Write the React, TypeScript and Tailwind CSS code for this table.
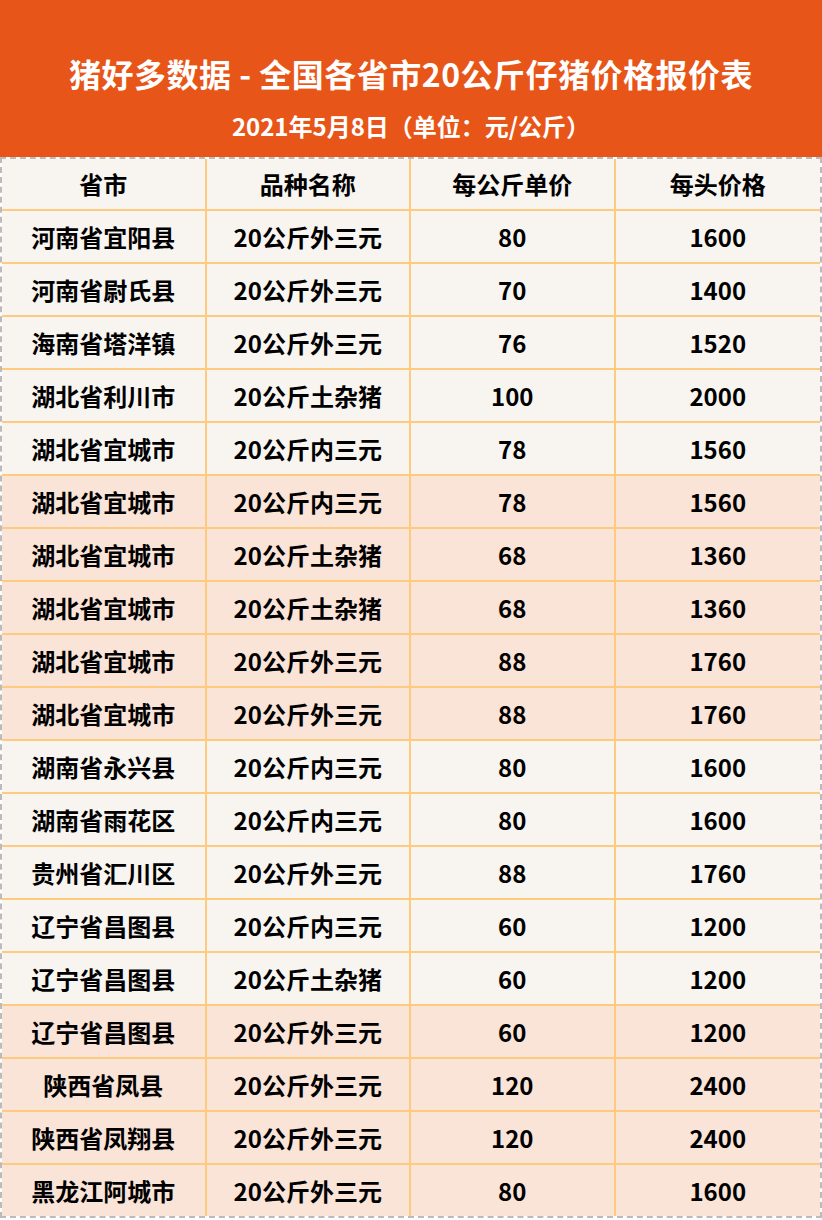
const rows: [string, string, string, string][] = [
  ["河南省宜阳县", "20公斤外三元", "80", "1600"],
  ["河南省尉氏县", "20公斤外三元", "70", "1400"],
  ["海南省塔洋镇", "20公斤外三元", "76", "1520"],
  ["湖北省利川市", "20公斤土杂猪", "100", "2000"],
  ["湖北省宜城市", "20公斤内三元", "78", "1560"],
  ["湖北省宜城市", "20公斤内三元", "78", "1560"],
  ["湖北省宜城市", "20公斤土杂猪", "68", "1360"],
  ["湖北省宜城市", "20公斤土杂猪", "68", "1360"],
  ["湖北省宜城市", "20公斤外三元", "88", "1760"],
  ["湖北省宜城市", "20公斤外三元", "88", "1760"],
  ["湖南省永兴县", "20公斤内三元", "80", "1600"],
  ["湖南省雨花区", "20公斤内三元", "80", "1600"],
  ["贵州省汇川区", "20公斤外三元", "88", "1760"],
  ["辽宁省昌图县", "20公斤内三元", "60", "1200"],
  ["辽宁省昌图县", "20公斤土杂猪", "60", "1200"],
  ["辽宁省昌图县", "20公斤外三元", "60", "1200"],
  ["陕西省凤县", "20公斤外三元", "120", "2400"],
  ["陕西省凤翔县", "20公斤外三元", "120", "2400"],
  ["黑龙江阿城市", "20公斤外三元", "80", "1600"],
];

// rows drawn on the pink background (the rest are the pale cream)
const pink = new Set([5, 6, 7, 8, 9, 15, 16, 17, 18]);

const headers = ["省市", "品种名称", "每公斤单价", "每头价格"];

function Cell({ text, last, lastRow }: { text: string; last: boolean; lastRow: boolean }) {
  return (
    <div
      className={`flex items-center justify-center ${last ? "" : "border-r-2 border-[#FDCA7E]"} ${
        lastRow ? "" : "border-b-2 border-b-[#FDCA7E]"
      }`}
    >
      {text}
    </div>
  );
}

export default function App() {
  return (
    <div
      className="w-[822px] h-[1220px] bg-white font-bold text-black"
      style={{ fontFamily: '"Noto Sans CJK SC", "Noto Sans", sans-serif' }}
    >
      {/* Title banner */}
      <div className="h-[157px] bg-[#E85518] flex flex-col items-center text-white">
        <div className="mt-[51px] text-[32px] leading-[44px] tracking-[0.5px]">
          猪好多数据 - 全国各省市20公斤仔猪价格报价表
        </div>
        <div className="mt-[15px] text-[24px] leading-[32px]">2021年5月8日（单位：元/公斤）</div>
      </div>

      {/* Table */}
      <div className="border-2 border-dashed border-[#BBBBBB] text-[24px]">
        <div className="grid grid-cols-4 h-[52px] bg-[#F8F4F0]">
          {headers.map((h, i) => (
            <Cell key={h} text={h} last={i === 3} lastRow={false} />
          ))}
        </div>
        {rows.map((r, ri) => (
          <div
            key={ri}
            className={`grid grid-cols-4 ${ri === rows.length - 1 ? "h-[51px]" : "h-[53px]"} ${
              pink.has(ri) ? "bg-[#FAE3D7]" : "bg-[#F8F4F0]"
            }`}
          >
            {r.map((c, ci) => (
              <Cell key={ci} text={c} last={ci === 3} lastRow={ri === rows.length - 1} />
            ))}
          </div>
        ))}
      </div>
    </div>
  );
}
